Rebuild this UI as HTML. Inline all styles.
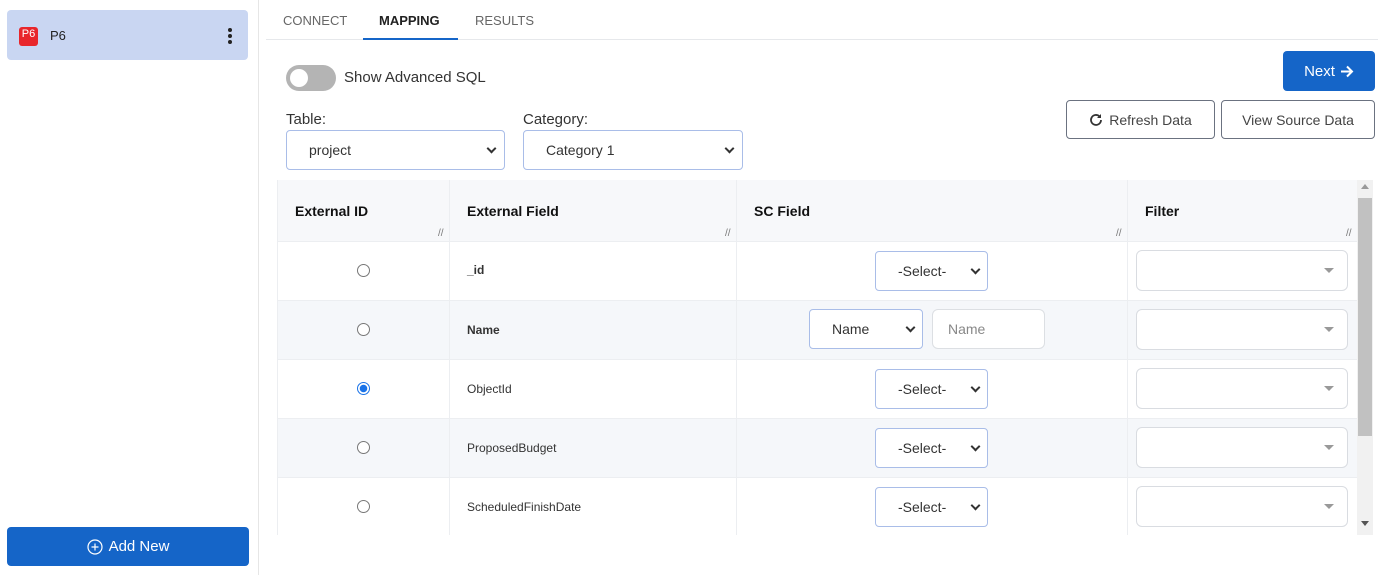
<!DOCTYPE html>
<html><head><style>
*{box-sizing:border-box;margin:0;padding:0}
body{width:1387px;height:575px;overflow:hidden;background:#fff;font-family:"Liberation Sans",Arial,sans-serif;color:#222;position:relative}
.abs{position:absolute}
.side{left:0;top:0;width:259px;height:575px;border-right:1px solid #e6e6e6}
.item{left:7px;top:10px;width:241px;height:50px;background:#c9d6f2;border-radius:4px}
.logo{left:19px;top:27px;width:19px;height:19px;background:#e8262b;border-radius:3px;color:#fff;font-size:11px;text-align:center;line-height:15px}
.add{left:7px;top:527px;width:242px;height:39px;background:#1565c8;border-radius:4px;color:#fff;font-size:15px;display:flex;align-items:center;justify-content:center;gap:6px}
.tab{top:13px;font-size:13px;color:#666}
.sel{border:1px solid #a9bde8;border-radius:4px;background:#fff;font-size:14px;color:#333;display:flex;align-items:center}
.btn{border:1px solid #6b7280;border-radius:4px;background:#fff;font-size:14px;color:#444;display:flex;align-items:center;justify-content:center}
.cell{position:absolute;border-right:1px solid #eceef1}
.hdr{font-weight:bold;font-size:14px;color:#111}
.radio{width:13px;height:13px;border:1px solid #777;border-radius:50%;background:#fff}
.f{font-size:12px;color:#333}
.filter{width:212px;height:41px;border:1px solid #d9dce1;border-radius:6px;background:#fff}
.chev{width:7px;height:7px;border-right:2px solid #333;border-bottom:2px solid #333;transform:rotate(45deg);position:absolute}
</style></head><body>
<div class="abs side"></div>
<div class="abs item"></div>
<div class="abs logo">P6</div>
<div class="abs" style="left:50px;top:28px;font-size:13px">P6</div>
<div class="abs" style="left:228px;top:28px;width:4px;height:4px;background:#222;border-radius:50%;box-shadow:0 6px 0 #222,0 12px 0 #222"></div>
<div class="abs add"><svg width="16" height="16" viewBox="0 0 16 16"><circle cx="8" cy="8" r="7" fill="none" stroke="#fff" stroke-width="1.2"/><path d="M8 4.5v7M4.5 8h7" stroke="#fff" stroke-width="1.2"/></svg>Add New</div>

<div class="abs tab" style="left:283px">CONNECT</div>
<div class="abs tab" style="left:379px;color:#222;font-weight:bold">MAPPING</div>
<div class="abs tab" style="left:475px">RESULTS</div>
<div class="abs" style="left:266px;top:39px;width:1112px;height:1px;background:#e6e8eb"></div>
<div class="abs" style="left:363px;top:38px;width:95px;height:2px;background:#1565c8"></div>

<div class="abs" style="left:286px;top:65px;width:50px;height:26px;background:#b4b4b4;border-radius:13px"></div>
<div class="abs" style="left:290px;top:69px;width:18px;height:18px;background:#fff;border-radius:50%"></div>
<div class="abs" style="left:344px;top:69px;font-size:15px;color:#333">Show Advanced SQL</div>

<div class="abs" style="left:1283px;top:51px;width:92px;height:40px;background:#1565c8;border-radius:4px;color:#fff;font-size:15px;display:flex;align-items:center;justify-content:center;gap:5px">Next <svg width="14" height="13" viewBox="0 0 14 13"><path d="M1 6.5h11M7 1.5l5 5-5 5" fill="none" stroke="#fff" stroke-width="2"/></svg></div>
<div class="abs btn" style="left:1066px;top:100px;width:149px;height:39px;gap:6px"><svg width="14" height="14" viewBox="0 0 14 14"><path d="M12 7a5 5 0 1 1-1.6-3.7" fill="none" stroke="#333" stroke-width="1.8"/><path d="M12 1v4h-4z" fill="#333"/></svg>Refresh Data</div>
<div class="abs btn" style="left:1221px;top:100px;width:154px;height:39px">View Source Data</div>

<div class="abs" style="left:286px;top:111px;font-size:15px;color:#333">Table:</div>
<div class="abs" style="left:523px;top:111px;font-size:15px;color:#333">Category:</div>
<div class="abs sel" style="left:286px;top:130px;width:219px;height:40px;padding-left:22px">project<span class="chev" style="right:9px;top:14px"></span></div>
<div class="abs sel" style="left:523px;top:130px;width:220px;height:40px;padding-left:22px">Category 1<span class="chev" style="right:9px;top:14px"></span></div>

<div class="abs" style="left:277px;top:180px;width:1080px;height:61px;background:#f7f8fa"></div>
<div class="abs" style="left:277px;top:300px;width:1080px;height:59px;background:#f5f7fa"></div>
<div class="abs" style="left:277px;top:418px;width:1080px;height:59px;background:#f5f7fa"></div>
<div class="abs" style="left:277px;top:241px;width:1080px;height:1px;background:#eceef1"></div>
<div class="abs" style="left:277px;top:300px;width:1080px;height:1px;background:#eceef1"></div>
<div class="abs" style="left:277px;top:359px;width:1080px;height:1px;background:#eceef1"></div>
<div class="abs" style="left:277px;top:418px;width:1080px;height:1px;background:#eceef1"></div>
<div class="abs" style="left:277px;top:477px;width:1080px;height:1px;background:#eceef1"></div>
<div class="abs" style="left:277px;top:180px;width:1px;height:355px;background:#eceef1"></div>
<div class="abs" style="left:449px;top:180px;width:1px;height:355px;background:#eceef1"></div>
<div class="abs" style="left:736px;top:180px;width:1px;height:355px;background:#eceef1"></div>
<div class="abs" style="left:1127px;top:180px;width:1px;height:355px;background:#eceef1"></div>
<div class="abs" style="left:1357px;top:180px;width:16px;height:355px;background:#f1f1f1"></div>
<div class="abs" style="left:1358px;top:198px;width:14px;height:238px;background:#c1c1c1"></div>
<div class="abs" style="left:1361px;top:184px;width:0;height:0;border:4px solid transparent;border-bottom:5px solid #999;border-top:0"></div>
<div class="abs" style="left:1361px;top:521px;width:0;height:0;border:4px solid transparent;border-top:5px solid #555;border-bottom:0"></div>

<div class="abs hdr" style="left:295px;top:203px">External ID</div>
<div class="abs hdr" style="left:467px;top:203px">External Field</div>
<div class="abs hdr" style="left:754px;top:203px">SC Field</div>
<div class="abs hdr" style="left:1145px;top:203px">Filter</div>
<div class="abs" style="left:438px;top:228px;font-size:10px;color:#777">//</div>
<div class="abs" style="left:725px;top:228px;font-size:10px;color:#777">//</div>
<div class="abs" style="left:1116px;top:228px;font-size:10px;color:#777">//</div>
<div class="abs" style="left:1346px;top:228px;font-size:10px;color:#777">//</div>

<div class="abs radio" style="left:357px;top:264px"></div>
<div class="abs radio" style="left:357px;top:323px"></div>
<div class="abs radio" style="left:357px;top:382px;border:1px solid #1a73e8;background:radial-gradient(circle,#1a73e8 3.5px,#fff 4px)"></div>
<div class="abs radio" style="left:357px;top:441px"></div>
<div class="abs radio" style="left:357px;top:500px"></div>

<div class="abs f" style="left:467px;top:263px;font-weight:bold">_id</div>
<div class="abs f" style="left:467px;top:323px;font-weight:bold">Name</div>
<div class="abs f" style="left:467px;top:382px">ObjectId</div>
<div class="abs f" style="left:467px;top:441px">ProposedBudget</div>
<div class="abs f" style="left:467px;top:500px">ScheduledFinishDate</div>

<div class="abs sel" style="left:875px;top:251px;width:113px;height:40px;padding-left:22px">-Select-<span class="chev" style="right:8px;top:14px"></span></div>
<div class="abs sel" style="left:809px;top:309px;width:114px;height:40px;padding-left:22px">Name<span class="chev" style="right:8px;top:14px"></span></div>
<div class="abs" style="left:932px;top:309px;width:113px;height:40px;border:1px solid #dcdfe3;border-radius:6px;background:#fff;font-size:14px;color:#888;padding:11px 0 0 15px">Name</div>
<div class="abs sel" style="left:875px;top:369px;width:113px;height:40px;padding-left:22px">-Select-<span class="chev" style="right:8px;top:14px"></span></div>
<div class="abs sel" style="left:875px;top:428px;width:113px;height:40px;padding-left:22px">-Select-<span class="chev" style="right:8px;top:14px"></span></div>
<div class="abs sel" style="left:875px;top:487px;width:113px;height:40px;padding-left:22px">-Select-<span class="chev" style="right:8px;top:14px"></span></div>

<div class="abs filter" style="left:1136px;top:250px"></div>
<div class="abs filter" style="left:1136px;top:309px"></div>
<div class="abs filter" style="left:1136px;top:368px"></div>
<div class="abs filter" style="left:1136px;top:427px"></div>
<div class="abs filter" style="left:1136px;top:486px"></div>
<div class="abs" style="left:1324px;top:268px;border:5px solid transparent;border-top:5px solid #999;border-bottom:0"></div>
<div class="abs" style="left:1324px;top:327px;border:5px solid transparent;border-top:5px solid #999;border-bottom:0"></div>
<div class="abs" style="left:1324px;top:386px;border:5px solid transparent;border-top:5px solid #999;border-bottom:0"></div>
<div class="abs" style="left:1324px;top:445px;border:5px solid transparent;border-top:5px solid #999;border-bottom:0"></div>
<div class="abs" style="left:1324px;top:504px;border:5px solid transparent;border-top:5px solid #999;border-bottom:0"></div>
</body></html>
